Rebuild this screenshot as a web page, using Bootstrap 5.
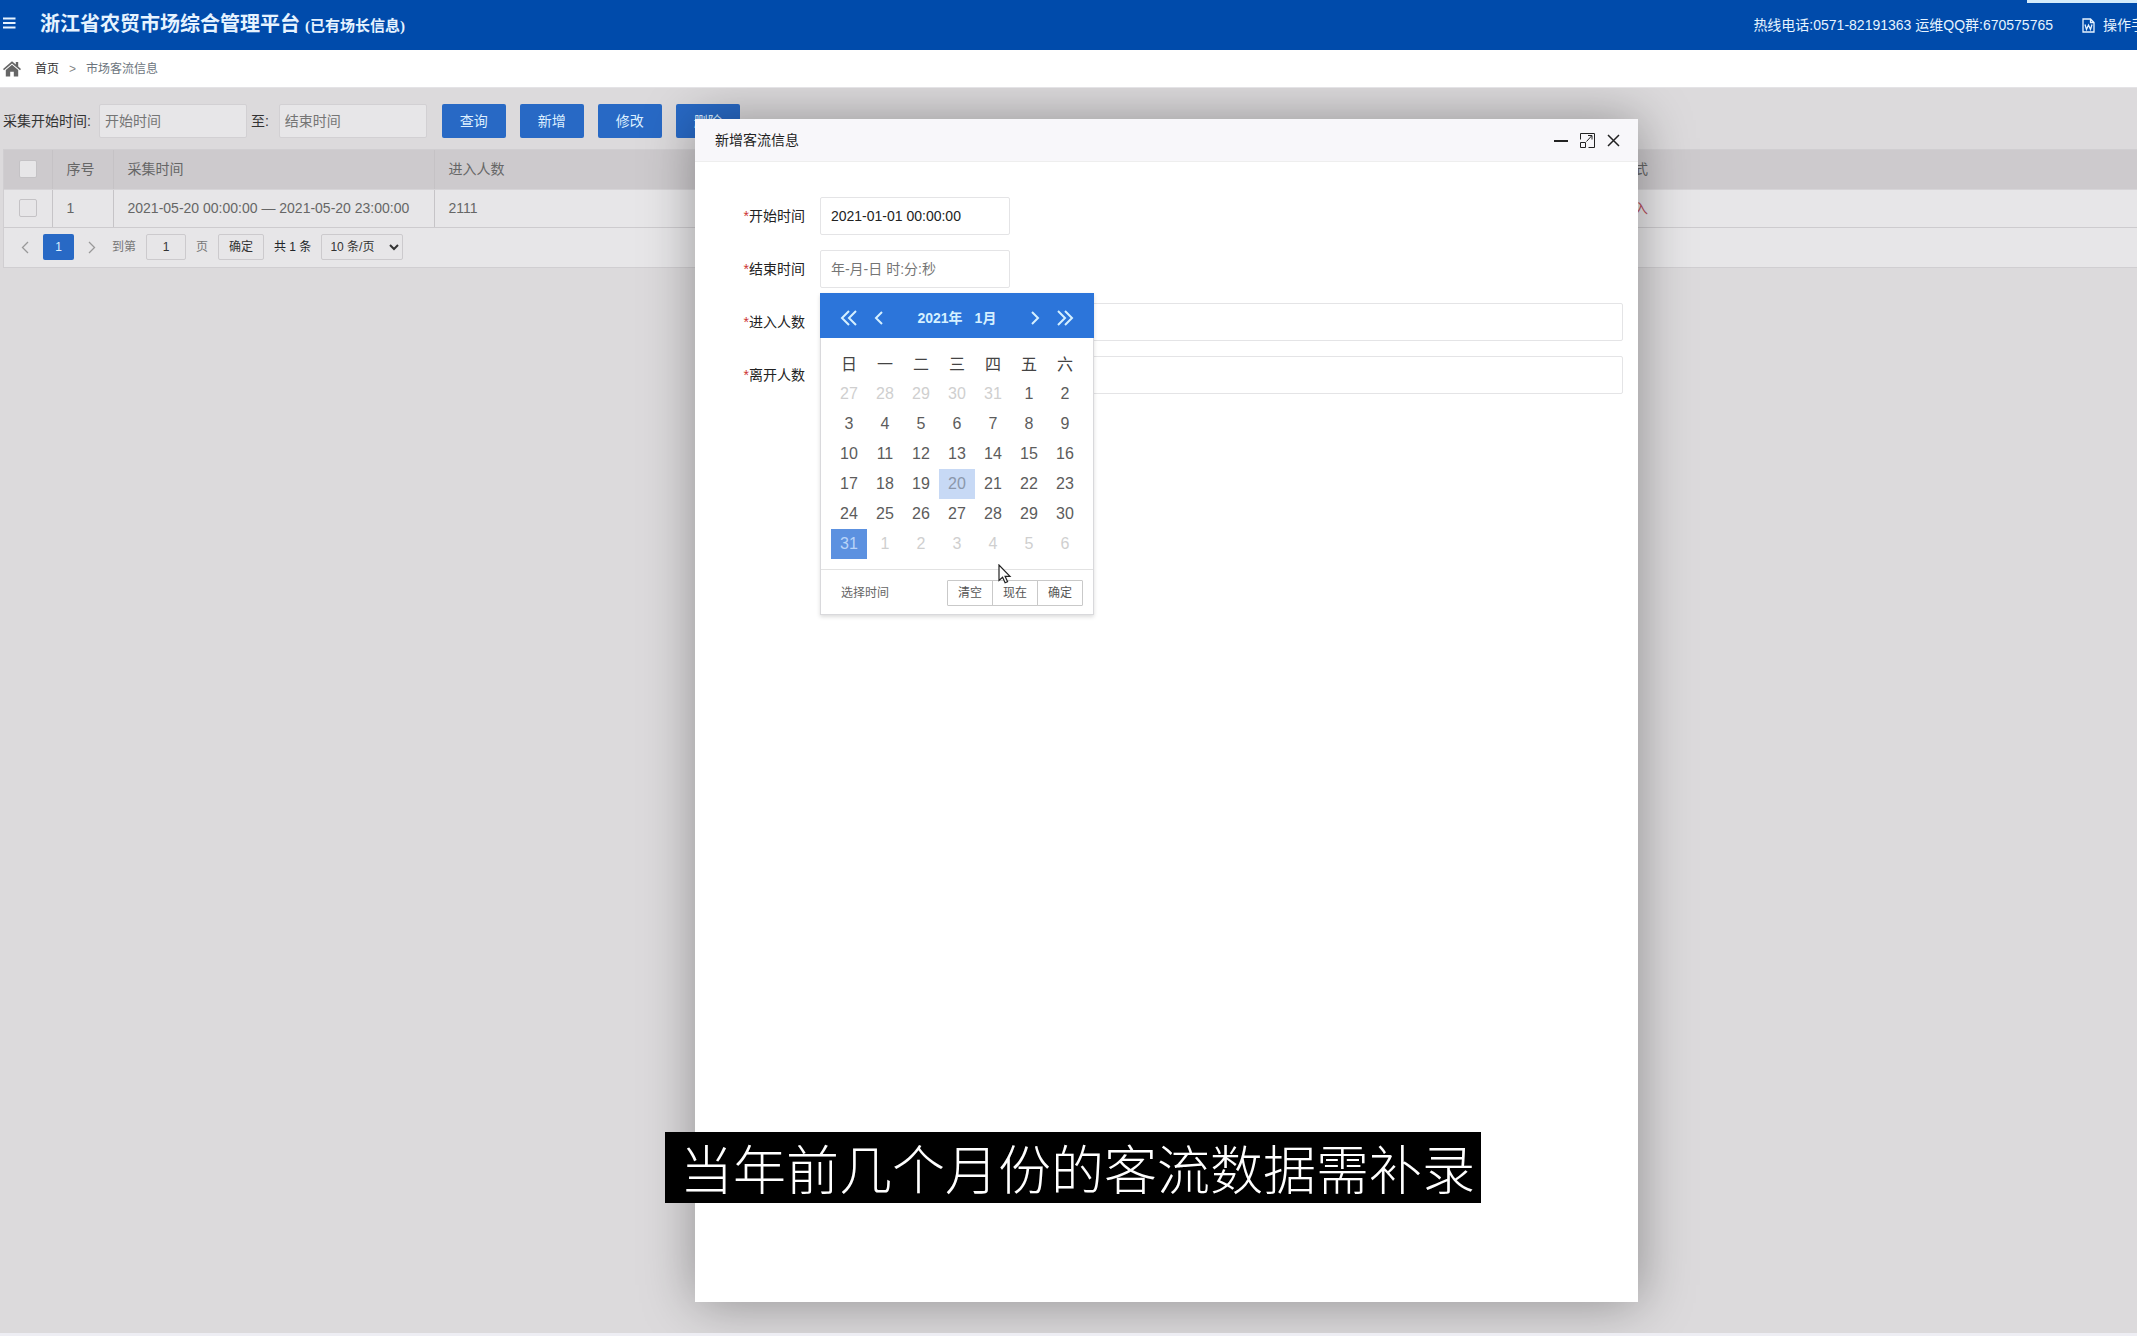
<!DOCTYPE html>
<html lang="zh-CN">
<head>
<meta charset="utf-8">
<meta name="viewport" content="width=device-width, initial-scale=1">
<title>浙江省农贸市场综合管理平台</title>
<link href="https://cdn.jsdelivr.net/npm/bootstrap@5.3.0/dist/css/bootstrap.min.css" rel="stylesheet">
<style>
body{font-family:"Liberation Sans","Noto Sans CJK SC",sans-serif;font-size:14px;line-height:20px;color:#333;background:#eeeef4;overflow:hidden}
button,input,select{font-family:inherit}
.topbar{height:50px;background:#004bab;color:#e6f3ff;overflow:hidden;padding-left:3px}
.topbar a,.topbar button{color:inherit;text-decoration:none}
.brand{font-family:"Liberation Serif","Noto Sans CJK SC",serif;font-weight:700;font-size:20px;line-height:24px;margin-left:24px}
.brand-note{font-size:15px}
.top-links{margin-right:-22px;gap:29px}
.top-tab{right:0;top:0;width:110px;height:3px;background:#d5ecfb}
.crumbs{height:38px;background:#fff;border-bottom:1px solid #e4e3e6;font-size:12px;padding:1px 0 0 3px;gap:10px}
.crumbs a{color:#333;text-decoration:none;margin-left:4px}
.workspace{background:#dcdadc;margin-bottom:3px;padding:16px 0 0 3px}
.filter{height:34px}
.filter .form-control{width:148px;height:34px;font-size:14px;line-height:20px;padding:0 5px;border:1px solid #d2d0d3;border-radius:2px;background:#e7e6e8;color:#555}
.filter .until{margin:0 10px 0 4px}
.filter .actions{gap:14px;margin-left:15px}
.form-control::placeholder{color:#757575}
.btn-act{width:64px;height:34px;padding:0;font-size:14px;border-radius:2px;border:0;background:#2869c5;color:#dcefff}
.btn-act:hover{background:#1f5db5;color:#fff}
.grid-box{margin-top:11px;background:#e7e6e8;border:1px solid #d0ced1;border-right:0}
.grid-box table{table-layout:fixed;margin:0;--bs-table-bg:transparent;color:#666}
.grid-box th,.grid-box td{height:39px;padding:0 14px;font-weight:400;vertical-align:middle;border:0;border-bottom:1px solid #cdcbce;color:#666}
.grid-box td{height:38px}
.grid-box thead th{background:#cdcacd;border-bottom-color:#d6d4d7}
.grid-box .line{border-right:1px solid #c6c4c7}
.grid-box thead .line{border-right-color:#c5c2c5}
.grid-box .form-check-input{display:block;width:18px;height:18px;margin:0 0 0 1px;border:1px solid #c4c2c5;border-radius:2px;background-color:#e7e6e8}
.grid-box .manual{color:#b8505e}
.pager{height:39px;font-size:12px;color:#777;padding-left:13px;gap:10px}
.pager button,.pager input,.pager select{height:26px;font-size:12px;line-height:16px;border:1px solid #cccacd;border-radius:2px;background:#e7e6e8;color:#333;padding:0}
.pager .arrow{border:0;width:16px;color:#999}
.pager .current{width:31px;background:#2869c5;border:0;color:#dcefff}
.pager label{margin-left:2px}
.pager input{width:40px;text-align:center}
.pager .go{width:46px}
.pager select{width:82px;padding-left:4px}
.dialog{left:32.52%;width:44.12%;top:31px;bottom:31px;background:#fff;box-shadow:1px 1px 50px rgba(0,0,0,.35)}
.dialog-head{height:43px;background:#f8f7fa;border-bottom:1px solid #eee;padding:0 18px 0 20px;color:#222}
.dialog-head button{border:0;background:none;padding:0;display:flex;color:#222}
.dialog-body{padding:35px 15px 0 0}
.form-line{margin-bottom:15px}
.form-line label{width:110px;margin-right:15px;text-align:right;color:#222}
.form-line .form-control{height:38px;font-size:14px;line-height:20px;padding:0 10px;border:1px solid #e4e4e6;border-radius:2px;color:#222}
.form-line .when{width:190px}
.star{color:#c33}
.cal{left:125px;top:174px;width:274px;background:#fff;box-shadow:0 2px 4px rgba(0,0,0,.14);border:1px solid #d9d9dc;border-top:0;z-index:3}
.cal-head{height:45px;margin:0 -1px;background:#2c75da;color:#d5f0ff;font-weight:700;padding:4px 20px 0}
.cal-head button{border:0;background:none;padding:0;color:inherit;display:flex}
.cal-body{padding:13px 10px 10px}
.cal-body table{width:252px;table-layout:fixed;border-collapse:collapse}
.cal-body th,.cal-body td{height:30px;padding:0;text-align:center;font-size:16px;line-height:20px;font-weight:400;color:#5c5c5c}
.cal-body th{height:28px;color:#444}
.cal-body .out{color:#cfcfcf}
.cal-body .now{background:#c7d9f5;color:#8b97ab}
.cal-body .picked{background:#5c91e0;color:#b9d4f8}
.cal-foot{height:45px;border-top:1px solid #e2e2e2;padding:2px 10px 0 20px;font-size:12px;color:#666}
.cal-foot .btn{width:46px;height:26px;padding:0;font-size:12px;line-height:16px;border:1px solid #c9c9c9;border-radius:1px;background:#fff;color:#555}
.pointer{left:303px;top:445px;z-index:4}
.caption{left:31.12%;bottom:130px;background:#000;color:#fff;font-size:53px;line-height:63px;font-weight:300;padding:8px 6px 0 15px;white-space:nowrap;z-index:5}
</style>
<script src="https://cdn.jsdelivr.net/npm/bootstrap@5.3.0/dist/js/bootstrap.bundle.min.js"></script>
</head>
<body class="vh-100 d-flex flex-column">
<header class="topbar d-flex align-items-center justify-content-between flex-shrink-0 position-relative">
  <div class="d-flex align-items-center">
    <button class="border-0 bg-transparent p-0 d-flex mb-1" aria-label="菜单"><svg width="13" height="12" viewBox="0 0 13 12"><path d="M0 1.5h12.500M0 6h12.500M0 10.500h12.500" stroke="currentColor" stroke-width="2"/></svg></button>
    <div class="brand">浙江省农贸市场综合管理平台 <span class="brand-note">(已有场长信息)</span></div>
  </div>
  <div class="top-links d-flex align-items-center text-nowrap">
    <span>热线电话:0571-82191363 运维QQ群:670575765</span>
    <a href="#" class="d-flex align-items-center gap-2"><svg width="13" height="15" viewBox="0 0 13 15" fill="none" stroke="currentColor" stroke-width="1.300"><path d="M1 1h7.500L12 4.500V14H1zM8.500 1v3.500H12M3 6.500l1.500 5 2-4.500 2 4.500 1.500-5"/></svg>操作手册</a>
  </div>
  <div class="top-tab position-absolute"></div>
</header>
<nav class="crumbs d-flex align-items-center flex-shrink-0" aria-label="路径">
  <svg width="18" height="16" viewBox="0 0 18 16" fill="#666"><path d="M9 3.800 2.800 9v6.500h4.400v-4.700h3.600v4.700h4.400V9z"/><path d="M9 .3 0 8l1 1.200 8-6.800 8 6.800L18 8l-2.800-2.400V1h-2.400v2.500z"/></svg>
  <a href="#">首页</a><span class="text-black-50">&gt;</span><span class="text-secondary">市场客流信息</span>
</nav>
<main class="workspace flex-grow-1 position-relative overflow-hidden">
  <form class="filter d-flex align-items-center text-nowrap">
    <label for="from" class="me-2">采集开始时间:</label>
    <input id="from" class="form-control" placeholder="开始时间">
    <label for="to" class="until">至:</label>
    <input id="to" class="form-control" placeholder="结束时间">
    <div class="actions d-flex">
      <button type="button" class="btn btn-act">查询</button>
      <button type="button" class="btn btn-act">新增</button>
      <button type="button" class="btn btn-act">修改</button>
      <button type="button" class="btn btn-act">删除</button>
    </div>
  </form>
  <div class="grid-box">
    <table class="table">
      <colgroup><col width="48"><col width="61"><col width="321"><col width="572"><col width="572"><col></colgroup>
      <thead><tr><th class="line"><input type="checkbox" class="form-check-input" aria-label="全选"></th><th class="line">序号</th><th class="line">采集时间</th><th>进入人数</th><th>离开人数</th><th>录入方式</th></tr></thead>
      <tbody><tr><td class="line"><input type="checkbox" class="form-check-input" aria-label="选择第1行"></td><td class="line">1</td><td class="line text-nowrap">2021-05-20 00:00:00 — 2021-05-20 23:00:00</td><td>2111</td><td></td><td class="manual">手动录入</td></tr></tbody>
    </table>
    <div class="pager d-flex align-items-center text-nowrap">
      <button class="arrow" aria-label="上一页"><svg width="8" height="13" viewBox="0 0 8 13" fill="none" stroke="currentColor" stroke-width="1.300"><path d="M7 1 1.500 6.500 7 12"/></svg></button>
      <button class="current">1</button>
      <button class="arrow" aria-label="下一页"><svg width="8" height="13" viewBox="0 0 8 13" fill="none" stroke="currentColor" stroke-width="1.300"><path d="m1 1 5.500 5.500L1 12"/></svg></button>
      <label for="page">到第</label><input id="page" value="1"><span>页</span>
      <button class="go">确定</button><span class="text-dark">共 1 条</span>
      <select aria-label="每页条数"><option>10 条/页</option></select>
    </div>
  </div>

  <section class="dialog position-absolute" role="dialog" aria-labelledby="dlg">
    <div class="dialog-head d-flex align-items-center justify-content-between">
      <span id="dlg">新增客流信息</span>
      <div class="d-flex align-items-center gap-2">
        <button aria-label="最小化" class="me-1"><svg width="14" height="14" viewBox="0 0 14 14"><path d="M0 8h14" stroke="currentColor" stroke-width="2"/></svg></button>
        <button aria-label="最大化" class="me-1"><svg width="15" height="15" viewBox="0 0 15 15" fill="none" stroke="currentColor"><path d="M.5 6.500v-6h14v14h-6M.5 9.500h5v5h-5zM6.500 8.500l5-5.500M8 2.500h4v4"/></svg></button>
        <button aria-label="关闭"><svg width="13" height="13" viewBox="0 0 13 13" stroke="currentColor" stroke-width="1.500"><path d="m1 1 11 11M12 1 1 12"/></svg></button>
      </div>
    </div>
    <form class="dialog-body">
      <div class="form-line d-flex align-items-center"><label for="start"><span class="star">*</span>开始时间</label><input id="start" class="form-control when" value="2021-01-01 00:00:00"></div>
      <div class="form-line d-flex align-items-center"><label for="end"><span class="star">*</span>结束时间</label><input id="end" class="form-control when" placeholder="年-月-日 时:分:秒"></div>
      <div class="form-line d-flex align-items-center"><label for="in" class="flex-shrink-0"><span class="star">*</span>进入人数</label><input id="in" class="form-control"></div>
      <div class="form-line d-flex align-items-center"><label for="out" class="flex-shrink-0"><span class="star">*</span>离开人数</label><input id="out" class="form-control"></div>
    </form>
    <div class="cal position-absolute">
      <div class="cal-head d-flex align-items-center justify-content-between">
        <div class="d-flex gap-3">
          <button aria-label="上一年"><svg width="18" height="16" viewBox="0 0 18 16" fill="none" stroke="currentColor" stroke-width="2"><path d="M9 1 2 8l7 7M16 1 9 8l7 7"/></svg></button>
          <button aria-label="上一月"><svg width="10" height="16" viewBox="0 0 10 16" fill="none" stroke="currentColor" stroke-width="2"><path d="M8 2 2 8l6 6"/></svg></button>
        </div>
        <div class="d-flex gap-2"><span class="me-1">2021年</span><span>1月</span></div>
        <div class="d-flex gap-3">
          <button aria-label="下一月"><svg width="10" height="16" viewBox="0 0 10 16" fill="none" stroke="currentColor" stroke-width="2"><path d="m2 2 6 6-6 6"/></svg></button>
          <button aria-label="下一年"><svg width="18" height="16" viewBox="0 0 18 16" fill="none" stroke="currentColor" stroke-width="2"><path d="m2 1 7 7-7 7M9 1l7 7-7 7"/></svg></button>
        </div>
      </div>
      <div class="cal-body">
        <table>
          <thead><tr><th>日</th><th>一</th><th>二</th><th>三</th><th>四</th><th>五</th><th>六</th></tr></thead>
          <tbody>
          <tr><td class="out">27</td><td class="out">28</td><td class="out">29</td><td class="out">30</td><td class="out">31</td><td>1</td><td>2</td></tr>
          <tr><td>3</td><td>4</td><td>5</td><td>6</td><td>7</td><td>8</td><td>9</td></tr>
          <tr><td>10</td><td>11</td><td>12</td><td>13</td><td>14</td><td>15</td><td>16</td></tr>
          <tr><td>17</td><td>18</td><td>19</td><td class="now">20</td><td>21</td><td>22</td><td>23</td></tr>
          <tr><td>24</td><td>25</td><td>26</td><td>27</td><td>28</td><td>29</td><td>30</td></tr>
          <tr><td class="picked">31</td><td class="out">1</td><td class="out">2</td><td class="out">3</td><td class="out">4</td><td class="out">5</td><td class="out">6</td></tr>
          </tbody>
        </table>
      </div>
      <div class="cal-foot d-flex align-items-center justify-content-between">
        <span>选择时间</span>
        <div class="btn-group"><button class="btn">清空</button><button class="btn">现在</button><button class="btn">确定</button></div>
      </div>
    </div>
    <svg class="pointer position-absolute" width="14" height="20" viewBox="0 0 14 20"><path d="M1 1v15.500l3.600-3.300 2.500 5.600 2.500-1.100-2.500-5.400H12z" fill="#fff" stroke="#222" stroke-width="1.200"/></svg>
  </section>
  <div class="caption position-absolute">当年前几个月份的客流数据需补录</div>
</main>
</body>
</html>
